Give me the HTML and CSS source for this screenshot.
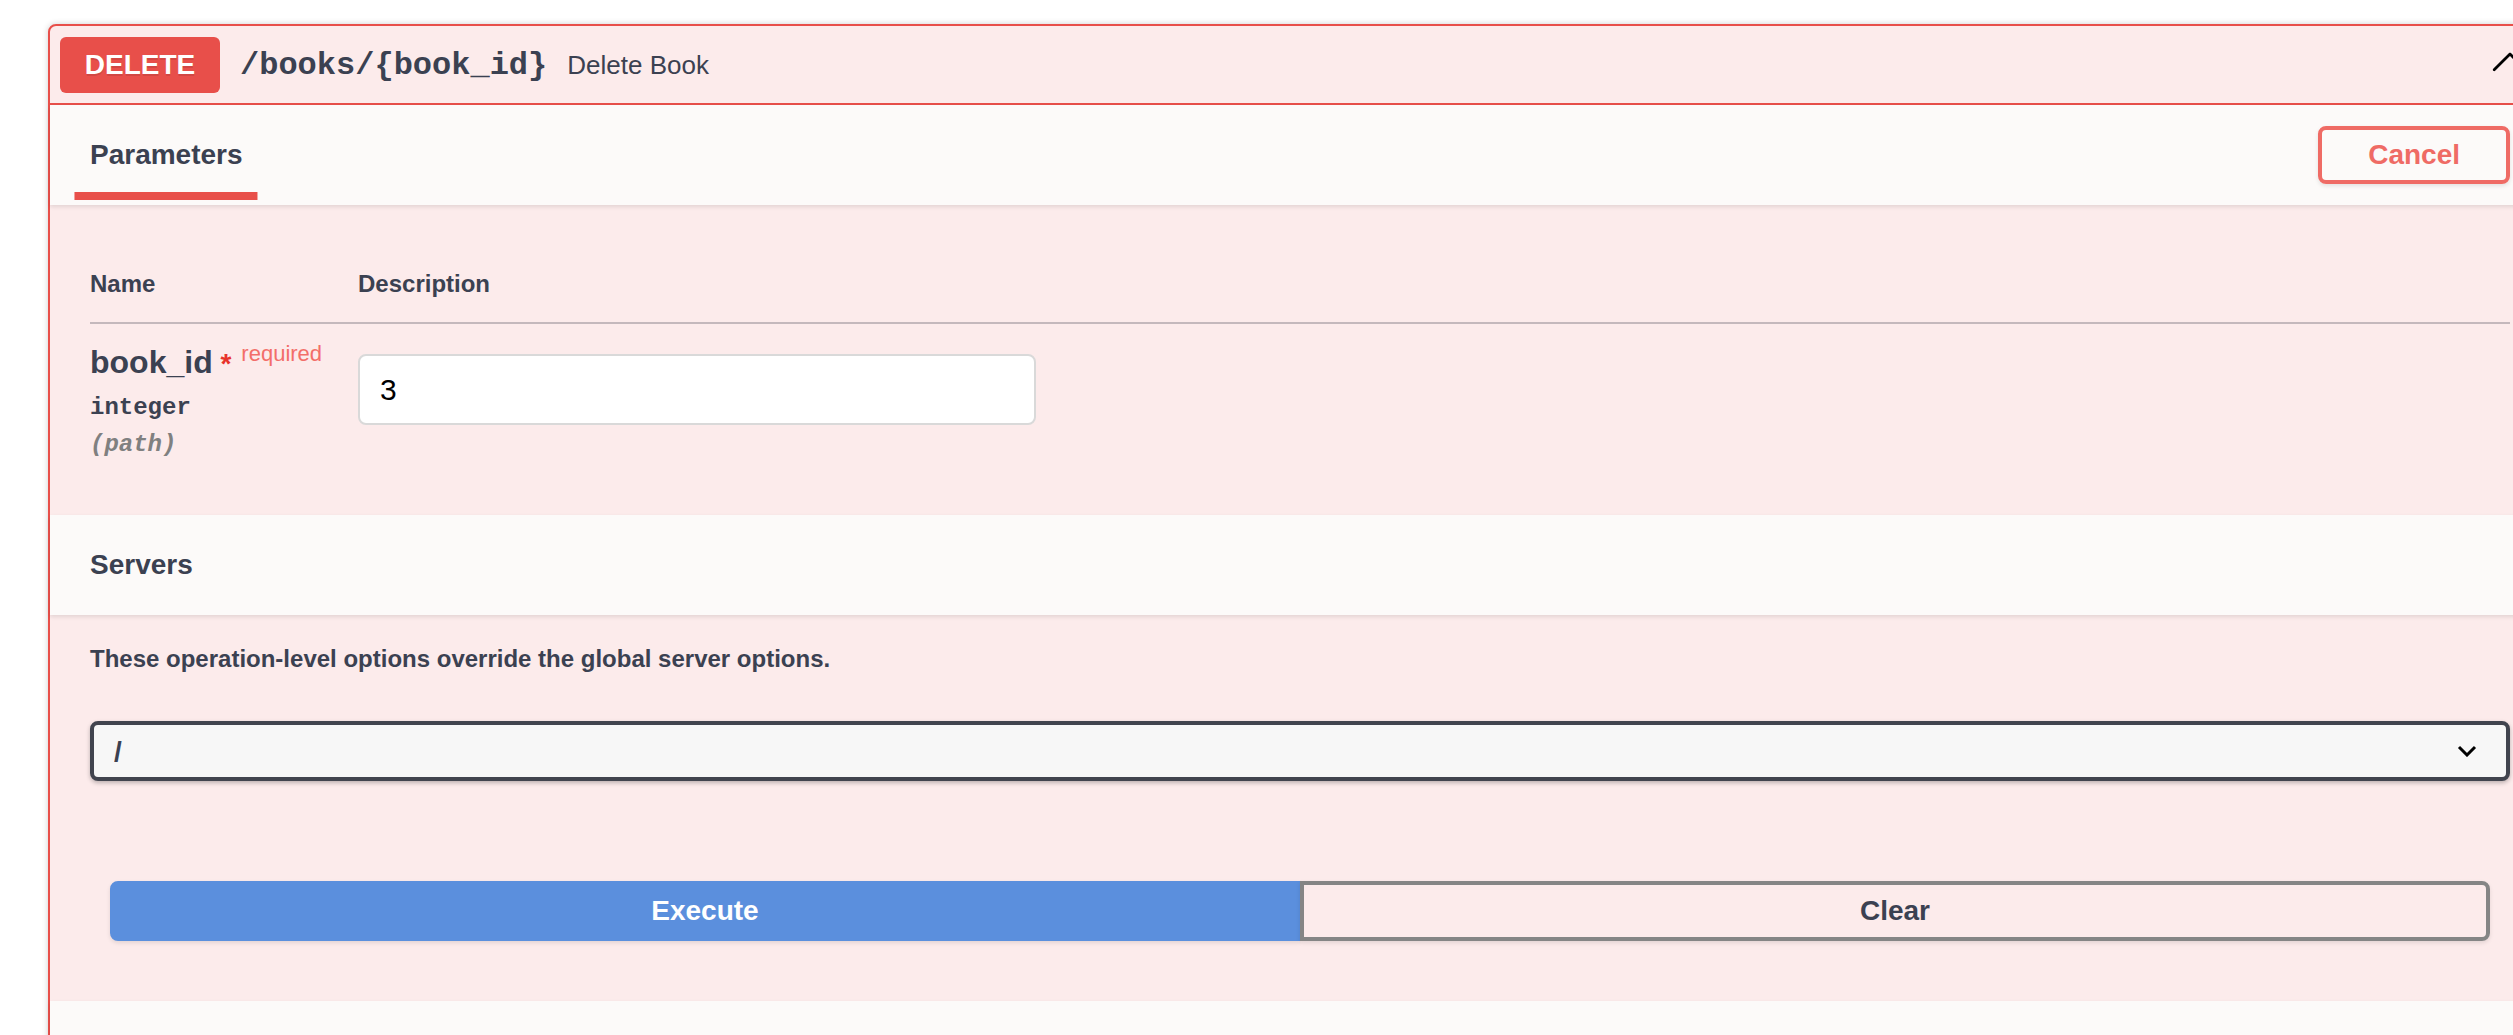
FILE: index.html
```html
<!DOCTYPE html>
<html lang="en">
<head>
  <meta charset="UTF-8" />
  <meta name="viewport" content="width=device-width, initial-scale=1.0"/>
  <title>DELETE /books/{book_id}</title>
  <link rel="stylesheet" href="styles.css">
</head>
<body>
  <div class="page">
    <div class="opblock">
      <div class="opblock-summary">
        <span class="method">DELETE</span>
        <span class="path">/books/{book_id}</span>
        <span class="summary-desc">Delete Book</span>
        <svg class="arrow" viewBox="0 0 20 20">
          <path d="M17.418 14.908c.271.271.709.271.979 0s.271-.708 0-.979L10.49 6.021c-.27-.271-.708-.271-.979 0L1.604 13.929c-.27.271-.27.709 0 .979s.708.271.979 0L10 7.5l7.418 7.408z" fill="#000"/>
        </svg>
      </div>

      <div class="section-header">
        <h4 class="tab-title"><span>Parameters</span></h4>
        <button class="btn cancel">Cancel</button>
      </div>

      <div class="table-container">
        <table class="parameters">
          <thead>
            <tr>
              <th class="col-name">Name</th>
              <th>Description</th>
            </tr>
          </thead>
          <tbody>
            <tr>
              <td class="col-name">
                <div class="param-name">book_id<span class="star">&nbsp;*</span><span class="req">required</span></div>
                <div class="param-type">integer</div>
                <div class="param-in">(path)</div>
              </td>
              <td>
                <input class="param-input" type="text" value="3">
              </td>
            </tr>
          </tbody>
        </table>
      </div>

      <div class="section-header">
        <h4>Servers</h4>
      </div>

      <div class="servers-wrapper">
        <p class="servers-msg">These operation-level options override the global server options.</p>
        <div class="select-wrap">
          <select class="server-select">
            <option value="/">/</option>
          </select>
          <svg class="select-arrow" viewBox="0 0 20 12">
            <polyline points="2,2 10,10 18,2" fill="none" stroke="#000" stroke-width="3"/>
          </svg>
        </div>
      </div>

      <div class="btn-group">
        <button class="btn execute">Execute</button>
        <button class="btn clear">Clear</button>
      </div>

      <!-- responses header, its title sits below the fold -->
      <div class="section-header"></div>
    </div>
  </div>
</body>
</html>
```

FILE: styles.css
```css
* {
  box-sizing: border-box;
}
html, body {
  margin: 0;
  overflow: hidden;
  background: #fff;
}
body {
  font-family: "Liberation Sans", Arial, sans-serif;
  color: #3b4151;
}
.page {
  padding: 24px 0 0 48px;
}
.opblock {
  width: 2504px;
  border: 2px solid #e84f4a;
  border-radius: 8px;
  background: #fcebeb;
  box-shadow: 0 0 6px rgba(0, 0, 0, .19);
}
.opblock-summary {
  display: flex;
  align-items: center;
  padding: 11px 10px 10px;
  border-bottom: 2px solid #e84f4a;
}
.method {
  min-width: 160px;
  padding: 12px 0;
  border-radius: 6px;
  background: #e84f4a;
  color: #fff;
  font-size: 28px;
  line-height: 32px;
  font-weight: 700;
  text-align: center;
  text-shadow: 0 2px 0 rgba(0, 0, 0, .1);
}
.path {
  padding: 0 20px;
  font-family: "Liberation Mono", "Courier New", monospace;
  font-size: 32px;
  font-weight: 700;
}
.summary-desc {
  font-size: 26px;
}
.arrow {
  width: 40px;
  height: 40px;
  margin: 0 10px 9px auto;
}

.section-header {
  display: flex;
  align-items: center;
  min-height: 100px;
  padding: 16px 40px;
  background: #fcfaf9;
  box-shadow: 0 2px 4px rgba(0, 0, 0, .1);
}
.section-header h4 {
  margin: 0;
  font-size: 28px;
  line-height: 32px;
  font-weight: 700;
}
.tab-title span {
  position: relative;
}
.tab-title span::after {
  content: "";
  position: absolute;
  left: 50%;
  bottom: -30px;
  width: 120%;
  height: 8px;
  transform: translateX(-50%);
  background: #e84f4a;
}

.btn {
  font-family: inherit;
  font-size: 28px;
  font-weight: 700;
  line-height: 30px;
  padding: 10px 46px;
  border: 4px solid #858585;
  border-radius: 8px;
  background: transparent;
  box-shadow: 0 2px 4px rgba(0, 0, 0, .1);
  cursor: pointer;
}
.cancel {
  margin-left: auto;
  border-color: #ef6b65;
  color: #ef6b65;
}

.table-container {
  padding: 40px 40px 37px;
}
.parameters {
  width: 100%;
  border-collapse: collapse;
}
.parameters th {
  padding: 25px 0 24px;
  font-size: 24px;
  line-height: 28px;
  font-weight: 700;
  text-align: left;
  border-bottom: 2px solid #c4b8bc;
}
.parameters td {
  padding: 20px 0;
  vertical-align: top;
}
.col-name {
  width: 268px;
}
.param-name {
  font-size: 32px;
  line-height: 37px;
  font-weight: 700;
}
.param-name .star {
  color: #e8332b;
  font-size: 28px;
}
.param-name .req {
  position: relative;
  top: -12px;
  padding: 10px;
  font-size: 22px;
  font-weight: 400;
  color: #f36e69;
}
.param-type,
.param-in {
  font-family: "Liberation Mono", "Courier New", monospace;
  font-size: 24px;
  line-height: 27px;
  font-weight: 700;
}
.param-type {
  padding: 10px 0;
}
.param-in {
  font-style: italic;
  color: #808080;
}
.param-input {
  display: block;
  width: 678px;
  margin: 10px 0;
  padding: 16px 20px;
  border: 2px solid #d9d9d9;
  border-radius: 8px;
  background: #fff;
  font-family: "Liberation Sans", Arial, sans-serif;
  font-size: 30px;
  line-height: 35px;
  color: #000;
}

.servers-wrapper {
  padding: 30px 40px 40px;
}
.servers-msg {
  margin: 0;
  font-size: 24px;
  line-height: 28px;
  font-weight: 700;
}
.select-wrap {
  position: relative;
  margin-top: 48px;
}
.server-select {
  display: block;
  width: 100%;
  height: 60px;
  appearance: none;
  padding: 0 80px 0 20px;
  border: 4px solid #41444e;
  border-radius: 8px;
  background: #f7f7f7;
  box-shadow: 0 2px 4px rgba(0, 0, 0, .25);
  font-family: inherit;
  font-size: 28px;
  font-weight: 700;
  color: #3b4151;
}
.select-arrow {
  position: absolute;
  right: 33px;
  top: 50%;
  width: 20px;
  height: 12px;
  transform: translateY(-50%);
  pointer-events: none;
}

.btn-group {
  display: flex;
  padding: 60px;
}
.btn-group .btn {
  flex: 1;
  padding: 10px;
  line-height: 32px;
}
.execute {
  background: #5b8fdd;
  border-color: #5b8fdd;
  color: #fff;
  border-radius: 8px 0 0 8px;
}
.clear {
  color: #3b4151;
  border-radius: 0 8px 8px 0;
}
```
